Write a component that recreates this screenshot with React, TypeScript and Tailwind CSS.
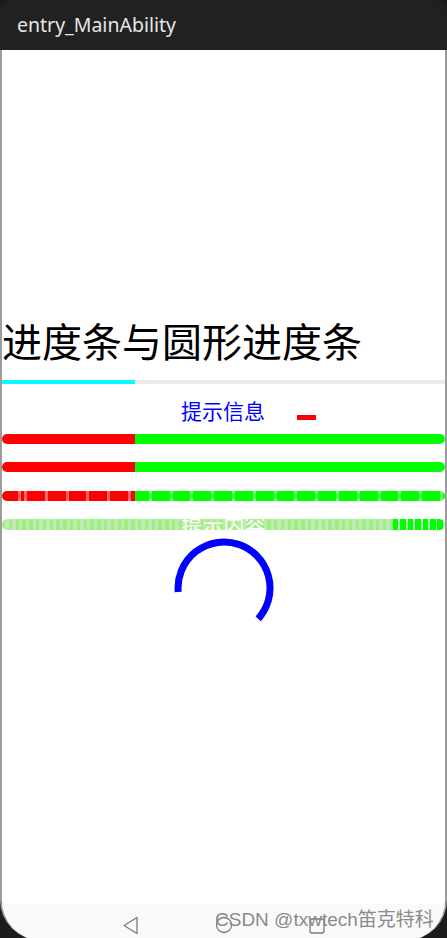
import React from "react";

const cjk = '"Noto Sans CJK SC", "Noto Sans", sans-serif';

function StripeBar() {
  // red/green bar with pale vertical ticks
  return (
    <div className="relative mt-[19px] flex h-[10px] overflow-hidden rounded-full">
      <div className="h-full w-[30%] bg-[#ff0000]" />
      <div className="h-full flex-1 bg-[#00ff00]" />
      <div className="absolute inset-0 bg-[repeating-linear-gradient(90deg,rgba(255,255,255,0.4)_0px,rgba(255,255,255,0.4)_3px,transparent_3px,transparent_20.8px)] bg-[position:22px_0]" />
    </div>
  );
}

export default function App() {
  return (
    <div className="relative h-[938px] w-[447px] overflow-hidden bg-[#1c1c1c]" style={{ fontFamily: cjk }}>
      {/* title bar */}
      <div className="flex h-[50px] items-center rounded-t-[14px] bg-[#212121] pl-[17px]">
        <span className="text-[19.5px] text-[#e6e6e6]" style={{ fontFamily: '"Noto Sans", sans-serif' }}>
          entry_MainAbility
        </span>
      </div>

      <div className="flex h-[890px] flex-col overflow-hidden rounded-b-[40px] border-x-2 border-[#9c9c9c] bg-white">
        <div className="flex flex-1 flex-col">
          <h1 className="mt-[267px] h-[48px] whitespace-nowrap text-[40px] leading-[46px] text-black">
            进度条与圆形进度条
          </h1>

          <div className="mt-[15px] h-[4px] bg-[#ebebeb]">
            <div className="h-full w-[30%] bg-[#00ffff]" />
          </div>

          <div className="mt-[11px] flex h-[30px] items-center pl-[179px]">
            <span className="text-[21px] leading-none text-[#0000ff]">提示信息</span>
            <span className="ml-[32px] mt-[14px] h-[5px] w-[19px] bg-[#ff0000]" />
          </div>

          <div className="mt-[9px] flex h-[10px] overflow-hidden rounded-full">
            <div className="h-full w-[30%] bg-[#ff0000]" />
            <div className="h-full flex-1 bg-[#00ff00]" />
          </div>

          <div className="mt-[18px] flex h-[10px] overflow-hidden rounded-full">
            <div className="h-full w-[30%] bg-[#ff0000]" />
            <div className="h-full flex-1 bg-[#00ff00]" />
          </div>

          <StripeBar />

          <div className="relative mt-[18px] flex h-[11px] overflow-hidden rounded-full">
            <div className="h-full flex-1 bg-[repeating-linear-gradient(90deg,#9af27c_0px,#9af27c_3.4px,#c2e9b5_3.4px,#c2e9b5_6.8px)]" />
            <div className="h-full w-[52px] bg-[repeating-linear-gradient(90deg,#00ff00_0px,#00ff00_5.5px,#b8ffb8_5.5px,#b8ffb8_7.4px)]" />
            <div className="absolute inset-0 flex items-center justify-center">
              <span className="text-[21px] leading-none text-white">提示内容</span>
            </div>
          </div>

          <svg className="mx-auto mt-[8px]" width="100" height="100" viewBox="0 0 100 100">
            <path d="M4.2 54 A46 46 0 1 1 84.2 80.8" fill="none" stroke="#0000ff" strokeWidth="7" />
          </svg>
        </div>

        {/* nav bar */}
        <div className="relative flex h-[36px] shrink-0 justify-center gap-[73px] bg-[#fafafa] pt-[11px]">
          <svg width="20" height="20" viewBox="0 0 20 20">
            <path d="M16 2.5 L3 10.5 L16 18.5 Z" fill="none" stroke="#7a7a7a" strokeWidth="1.3" strokeLinejoin="round" />
          </svg>
          <svg width="20" height="20" viewBox="0 0 20 20">
            <circle cx="10" cy="10" r="7.5" fill="none" stroke="#7a7a7a" strokeWidth="1.3" />
          </svg>
          <svg width="20" height="20" viewBox="0 0 20 20">
            <rect x="3" y="4" width="14" height="14" rx="2" fill="none" stroke="#7a7a7a" strokeWidth="1.3" />
          </svg>
          <span
            className="absolute left-[213px] top-[6px] whitespace-nowrap text-[19px] leading-none text-[#8a8a8a]"
            style={{ fontFamily: '"Liberation Sans", "Noto Sans CJK SC", sans-serif' }}
          >
            CSDN @txwtech笛克特科
          </span>
        </div>
      </div>
    </div>
  );
}
